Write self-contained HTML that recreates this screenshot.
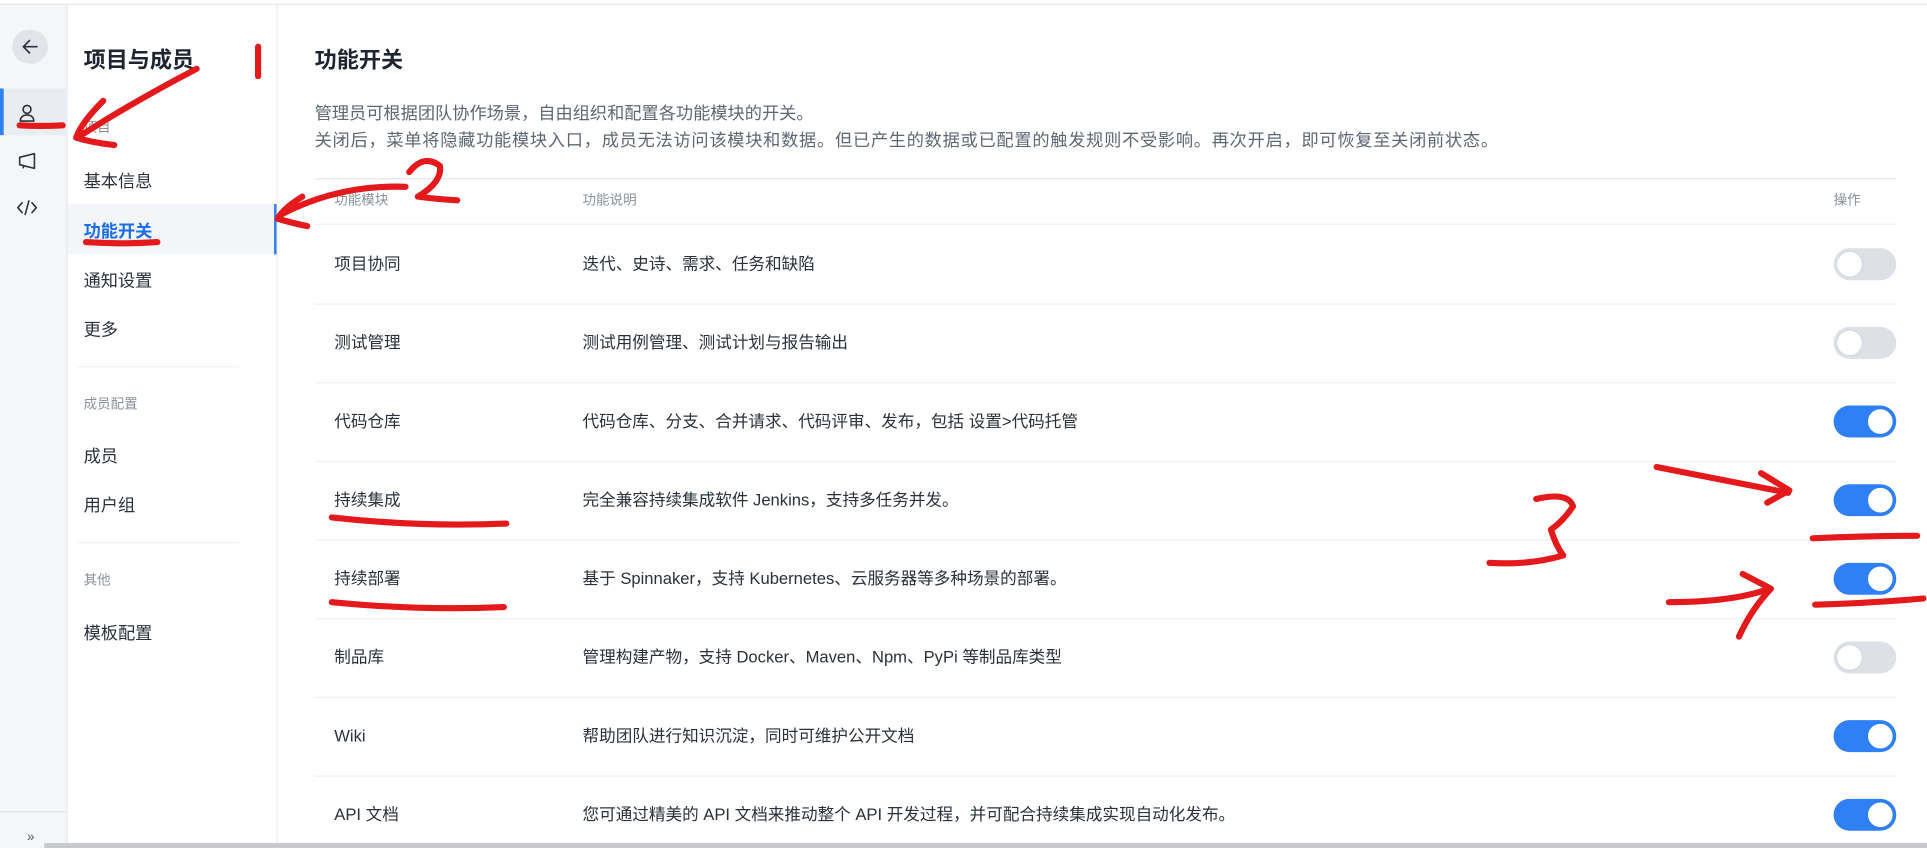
<!DOCTYPE html>
<html><head><meta charset="utf-8"><style>
*{margin:0;padding:0;box-sizing:border-box}
html,body{width:1927px;height:848px;overflow:hidden;background:#fff}
body{font-family:"Liberation Sans","Noto Sans CJK SC",sans-serif;color:#2b303b}
#s{position:absolute;left:0;top:0;width:1568px;height:690px;transform:scale(1.22895);transform-origin:0 0;background:#fff}
.abs{position:absolute}
.t{position:absolute;white-space:nowrap;line-height:1;transform:translateY(-50%)}
.rail{left:0;top:4px;width:55px;height:686px;background:#f5f6f8;border-right:1px solid #e6e8ec}
.tg{position:absolute;left:1492px;width:51px;height:26px;border-radius:13px;transform:translateY(-50%)}
.off{background:#dde0e6}
.off::after{content:"";position:absolute;left:2px;top:2px;width:22px;height:22px;border-radius:50%;background:#fff;border:1px solid #d4d7dd;box-sizing:border-box}
.on{background:#2f7ff5}
.on::after{content:"";position:absolute;right:2px;top:2px;width:22px;height:22px;border-radius:50%;background:#fff;border:1px solid #2f7ff5;box-sizing:border-box}
.ln{position:absolute;left:256px;width:1287px;height:1px;background:#eef0f3}
.m{font-size:13.5px;color:#2b303b}
.d{font-size:13.5px;color:#2b303b}
.mi{font-size:14px;color:#2b303b}
.g{font-size:11px;color:#8a9099}
</style></head><body><div id="s">
<div class="abs" style="left:0;top:3px;width:1568px;height:1px;background:#e3e5e9"></div>
<div class="abs rail"></div>
<div class="abs" style="left:10px;top:24px;width:29px;height:28px;border-radius:50%;background:#e1e4ea"></div>
<svg class="abs" style="left:17px;top:31px" width="15" height="14" viewBox="0 0 15 14"><path d="M13 7H2M7 2L2 7l5 5" fill="none" stroke="#2b303b" stroke-width="1.4" stroke-linecap="round" stroke-linejoin="round"/></svg>
<div class="abs" style="left:0;top:72px;width:55px;height:38px;background:#e9ecf1"></div>
<div class="abs" style="left:0;top:72px;width:3px;height:38px;background:#2f7ff5"></div>
<svg class="abs" style="left:14px;top:84px" width="16" height="16" viewBox="0 0 16 16"><circle cx="8" cy="5" r="3.2" fill="none" stroke="#2b303b" stroke-width="1.3"/><path d="M2.5 14.5c0-3.2 2.4-5 5.5-5s5.5 1.8 5.5 5z" fill="none" stroke="#2b303b" stroke-width="1.3" stroke-linejoin="round"/></svg>
<svg class="abs" style="left:14px;top:123px" width="16" height="16" viewBox="0 0 16 16"><path d="M2 5v6l12 3V2z" fill="none" stroke="#2b303b" stroke-width="1.3" stroke-linejoin="round"/><path d="M5 11.5v2.5" stroke="#2b303b" stroke-width="1.3"/></svg>
<svg class="abs" style="left:13px;top:162px" width="18" height="14" viewBox="0 0 18 14"><path d="M5 3L1.5 7 5 11M13 3l3.5 4-3.5 4M10.5 1.5l-3 11" fill="none" stroke="#2b303b" stroke-width="1.3" stroke-linecap="round" stroke-linejoin="round"/></svg>
<div class="abs" style="left:0;top:660px;width:55px;height:1px;background:#e3e5e9"></div>
<div class="t" style="left:22px;top:682px;font-size:11px;color:#555">»</div>
<div class="abs" style="left:225px;top:4px;width:1px;height:686px;background:#eceef1"></div>
<div class="t" style="left:68px;top:49px;font-size:18px;font-weight:bold;color:#1f2430">项目与成员</div>
<div class="t g" style="left:68px;top:105px">项目</div>
<div class="t mi" style="left:68px;top:147px">基本信息</div>
<div class="abs" style="left:55px;top:166px;width:170px;height:41px;background:#f3f5f8;border-right:2px solid #2f7ff5"></div>
<div class="t mi" style="left:68px;top:188px;color:#1a6ce8;font-weight:bold">功能开关</div>
<div class="t mi" style="left:68px;top:228px">通知设置</div>
<div class="t mi" style="left:68px;top:268px">更多</div>
<div class="abs" style="left:63px;top:298px;width:132px;height:1px;background:#eef0f3"></div>
<div class="t g" style="left:68px;top:330px">成员配置</div>
<div class="t mi" style="left:68px;top:371px">成员</div>
<div class="t mi" style="left:68px;top:411px">用户组</div>
<div class="abs" style="left:63px;top:441px;width:132px;height:1px;background:#eef0f3"></div>
<div class="t g" style="left:68px;top:473px">其他</div>
<div class="t mi" style="left:68px;top:515px">模板配置</div>
<div class="t" style="left:256px;top:49px;font-size:18px;font-weight:bold;color:#1f2430">功能开关</div>
<div class="t" style="left:256px;top:92px;font-size:14px;color:#5f6673">管理员可根据团队协作场景，自由组织和配置各功能模块的开关。</div>
<div class="t" style="left:256px;top:114px;font-size:14px;color:#5f6673;letter-spacing:0.6px">关闭后，菜单将隐藏功能模块入口，成员无法访问该模块和数据。但已产生的数据或已配置的触发规则不受影响。再次开启，即可恢复至关闭前状态。</div>
<div class="ln" style="top:145px;background:#e3e5e9"></div>
<div class="t g" style="left:272px;top:164px">功能模块</div>
<div class="t g" style="left:474px;top:164px">功能说明</div>
<div class="t g" style="left:1492px;top:164px">操作</div>
<div class="ln" style="top:182px"></div>
<div class="ln" style="top:247px"></div>
<div class="ln" style="top:311px"></div>
<div class="ln" style="top:375px"></div>
<div class="ln" style="top:439px"></div>
<div class="ln" style="top:503px"></div>
<div class="ln" style="top:567px"></div>
<div class="ln" style="top:631px"></div>
<div class="t m" style="left:272px;top:215px">项目协同</div><div class="t d" style="left:474px;top:215px">迭代、史诗、需求、任务和缺陷</div><div class="tg off" style="top:215px"></div>
<div class="t m" style="left:272px;top:279px">测试管理</div><div class="t d" style="left:474px;top:279px">测试用例管理、测试计划与报告输出</div><div class="tg off" style="top:279px"></div>
<div class="t m" style="left:272px;top:343px">代码仓库</div><div class="t d" style="left:474px;top:343px">代码仓库、分支、合并请求、代码评审、发布，包括 设置&gt;代码托管</div><div class="tg on" style="top:343px"></div>
<div class="t m" style="left:272px;top:407px">持续集成</div><div class="t d" style="left:474px;top:407px">完全兼容持续集成软件 Jenkins，支持多任务并发。</div><div class="tg on" style="top:407px"></div>
<div class="t m" style="left:272px;top:471px">持续部署</div><div class="t d" style="left:474px;top:471px">基于 Spinnaker，支持 Kubernetes、云服务器等多种场景的部署。</div><div class="tg on" style="top:471px"></div>
<div class="t m" style="left:272px;top:535px">制品库</div><div class="t d" style="left:474px;top:535px">管理构建产物，支持 Docker、Maven、Npm、PyPi 等制品库类型</div><div class="tg off" style="top:535px"></div>
<div class="t m" style="left:272px;top:599px">Wiki</div><div class="t d" style="left:474px;top:599px">帮助团队进行知识沉淀，同时可维护公开文档</div><div class="tg on" style="top:599px"></div>
<div class="t m" style="left:272px;top:663px">API 文档</div><div class="t d" style="left:474px;top:663px">您可通过精美的 API 文档来推动整个 API 开发过程，并可配合持续集成实现自动化发布。</div><div class="tg on" style="top:663px"></div>
<div class="abs" style="left:36px;top:686px;width:1532px;height:4px;background:#c8c9cc"></div>
<svg class="abs" style="left:0;top:0" width="1568" height="690" viewBox="0 0 1568 690"><g fill="none" stroke="#e3191c" stroke-width="5" stroke-linecap="round" stroke-linejoin="round">
<path d="M210 38V62"/>
<path d="M160 56Q110 82 66 110"/><path d="M84 82Q66 100 62 112Q75 116 93 118"/>
<path d="M16 102Q33 103 51 102"/>
<path d="M333 140Q345 125 358 135Q360 148 340 160Q355 162 372 163"/>
<path d="M330 152Q275 150 228 175"/><path d="M246 160Q230 170 226 178Q236 181 250 184"/>
<path d="M70 197Q98 199 128 197"/>
<path d="M270 421Q340 429 412 426"/>
<path d="M270 490Q340 497 410 494"/>
<path d="M1250 406Q1276 400 1280 412Q1272 424 1262 431Q1266 444 1272 452Q1245 460 1212 458"/>
<path d="M1348 380Q1400 390 1455 401"/><path d="M1433 385L1456 399L1438 409"/>
<path d="M1475 438Q1520 436 1560 436"/>
<path d="M1358 490Q1410 490 1440 479"/><path d="M1418 467L1441 479Q1425 496 1415 518"/>
<path d="M1477 492Q1520 491 1565 487"/>
</g></svg>
</div></body></html>
